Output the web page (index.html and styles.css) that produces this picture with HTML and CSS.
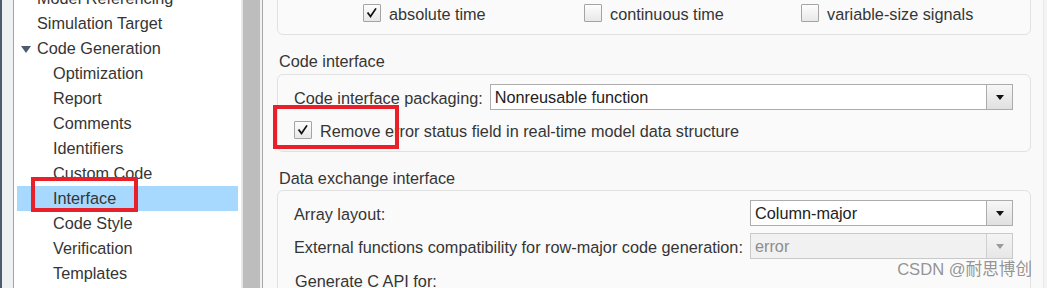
FILE: index.html
```html
<!DOCTYPE html>
<html lang="en">
<head>
  <meta charset="UTF-8" />
  <title>Configuration Parameters - Interface</title>
  <link rel="stylesheet" href="styles.css">
</head>
<body>
  <div class="edge"></div>
  <div class="gutter"></div>

  <div class="tree">
    <div class="tree-item l1">Model Referencing</div>
    <div class="tree-item l1">Simulation Target</div>
    <div class="tree-item open"><span class="caret"></span>Code Generation</div>
    <div class="tree-item l2">Optimization</div>
    <div class="tree-item l2">Report</div>
    <div class="tree-item l2">Comments</div>
    <div class="tree-item l2">Identifiers</div>
    <div class="tree-item l2">Custom Code</div>
    <div class="tree-item l2 selected">Interface<span class="mark mark-tree"></span></div>
    <div class="tree-item l2">Code Style</div>
    <div class="tree-item l2">Verification</div>
    <div class="tree-item l2">Templates</div>
  </div>
  <div class="scrollbar"></div>
  <div class="splitter"></div>

  <div class="main">
    <div class="group group-top">
      <div class="check-row">
        <label class="check col-a">
          <span class="box"><svg viewBox="0 0 18 18"><path d="M4 8.5 L7.3 13 L13.5 3.8" /></svg></span>
          <span class="text">absolute time</span>
        </label>
        <label class="check col-b"><span class="box"></span><span class="text">continuous time</span></label>
        <label class="check"><span class="box"></span><span class="text">variable-size signals</span></label>
      </div>
    </div>

    <div class="group-title">Code interface</div>
    <div class="group">
      <div class="row">
        <span class="label">Code interface packaging:</span>
        <div class="select wide">
          <span class="value">Nonreusable function</span>
          <span class="arrow"></span>
        </div>
      </div>
      <div class="row">
        <label class="check">
          <span class="box"><svg viewBox="0 0 18 18"><path d="M4 8.5 L7.3 13 L13.5 3.8" /></svg></span>
          <span class="text">Remove error status field in real-time model data structure</span>
        </label>
        <span class="mark mark-check"></span>
      </div>
    </div>

    <div class="group-title">Data exchange interface</div>
    <div class="group">
      <div class="row">
        <span class="label">Array layout:</span>
        <div class="select fixed">
          <span class="value">Column-major</span>
          <span class="arrow"></span>
        </div>
      </div>
      <div class="row">
        <span class="label">External functions compatibility for row-major code generation:</span>
        <div class="select fixed disabled">
          <span class="value">error</span>
          <span class="arrow"></span>
        </div>
      </div>
      <div class="row">
        <span class="label api">Generate C API for:</span>
      </div>
    </div>
  </div>
  <div class="rail"></div>

  <div class="watermark">CSDN @耐思博创</div>
</body>
</html>
```

FILE: styles.css
```css
:root {
  --text: #353535;
  --border: #e1e1e1;
  --field-border: #acacac;
  --select-blue: #a6d9fd;
  --mark-red: #e8202a;
}

body {
  margin: 0;
  height: 288px;
  overflow: hidden;
  display: flex;
  position: relative;
  font-family: "Liberation Sans", Arial, sans-serif;
  font-size: 16.25px;
  color: var(--text);
  background: #f9f9f9;
}

/* left chrome */
.edge {
  width: 2px;
  background: #4d5b6b;
}

.gutter {
  width: 11px;
  background: #eff0f1;
  border-right: 1px solid #a3a3a3;
}

.tree {
  width: 227px;
  background: #fff;
  border-right: 2px solid #e7e7e7;
  overflow: hidden;
}

.tree-item {
  position: relative;
  height: 25px;
  margin: 0 3px;
  display: flex;
  align-items: center;
  white-space: nowrap;
}

.tree-item:first-child { margin-top: -14px; }
.tree-item.l1 { padding-left: 20px; }
.tree-item.l2 { padding-left: 36px; }
.tree-item.open { padding-left: 4px; }
.tree-item.selected { background: var(--select-blue); }

.caret {
  width: 0;
  height: 0;
  border-left: 5px solid transparent;
  border-right: 5px solid transparent;
  border-top: 7px solid #4d5b6e;
  margin: 1px 6px 0 0;
}

.scrollbar {
  width: 17px;
  background: #bdbdbd;
}

.splitter {
  width: 2px;
  background: #f1f1f1;
  border-right: 1px solid #a9a9a9;
}

/* red annotation boxes */
.mark {
  position: absolute;
  border: 4px solid var(--mark-red);
  box-sizing: border-box;
  pointer-events: none;
}

.mark-tree {
  left: 14px;
  top: -9px;
  width: 107px;
  height: 35px;
}

.mark-check {
  left: -21px;
  top: -12px;
  width: 126px;
  height: 44px;
}

/* main panel */
.main {
  flex: 1;
  padding: 0 12px 0 14px;
  display: flex;
  flex-direction: column;
  overflow: hidden;
}

.rail {
  width: 3px;
  background: #f4f4f4;
  border-left: 1px solid #e8e8e8;
}

.group {
  flex-shrink: 0;
  border: 1px solid var(--border);
  border-radius: 6px;
  background: #fafafa;
  padding: 9px 17px 8px 16px;
  display: flex;
  flex-direction: column;
  gap: 7px;
}

.group-top {
  margin-top: -20px;
  padding: 22px 16px 11px 85px;
}

.group-title {
  line-height: 20px;
  margin: 16px 0 3px 2px;
}

.group-title + .group + .group-title { margin-bottom: 2px; }

.check-row {
  display: flex;
  height: 20px;
  align-items: center;
}

.col-a { width: 221px; }
.col-b { width: 217px; }

.row {
  position: relative;
  height: 26px;
  display: flex;
  align-items: center;
}

.label {
  white-space: nowrap;
  padding-top: 2px;
}

.label.api { padding: 5px 0 0 1px; }

.check {
  display: flex;
  align-items: center;
  gap: 8px;
  white-space: nowrap;
}

.check .text { padding-top: 2px; }

.box {
  width: 18px;
  height: 18px;
  box-sizing: border-box;
  border: 1px solid #a4a4a4;
  border-radius: 1px;
  background: linear-gradient(#fdfdfd, #e8e8e8);
  display: flex;
}

.box svg {
  width: 16px;
  height: 16px;
}

.box path {
  fill: none;
  stroke: #111;
  stroke-width: 2;
}

/* dropdowns */
.select {
  height: 26px;
  box-sizing: border-box;
  border: 1px solid var(--field-border);
  background: #fff;
  display: flex;
  color: #222;
}

.select.wide {
  flex: 1;
  margin-left: 7px;
}

.select.fixed {
  width: 263px;
  margin-left: auto;
}

.select .value {
  flex: 1;
  line-height: 25px;
  padding-left: 4px;
}

.select .arrow {
  width: 25px;
  border-left: 1px solid var(--field-border);
  background: linear-gradient(#f7f7f7, #e0e0e0);
  display: flex;
  align-items: center;
  justify-content: center;
}

.select .arrow::after {
  content: "";
  border-left: 4px solid transparent;
  border-right: 4px solid transparent;
  border-top: 5px solid #111;
}

.select.disabled {
  background: #f1f1f1;
  border-color: #c9c9c9;
  color: #8d8d8d;
}

.select.disabled .arrow {
  border-left-color: #d0d0d0;
  background: linear-gradient(#f4f4f4, #e7e7e7);
}

.select.disabled .arrow::after { border-top-color: #9a9a9a; }

.watermark {
  position: absolute;
  right: 15px;
  top: 260px;
  line-height: 20px;
  font-family: "Liberation Sans", "Noto Sans CJK SC", sans-serif;
  font-size: 16.6px;
  color: rgba(120, 120, 120, 0.8);
  white-space: nowrap;
}
```
